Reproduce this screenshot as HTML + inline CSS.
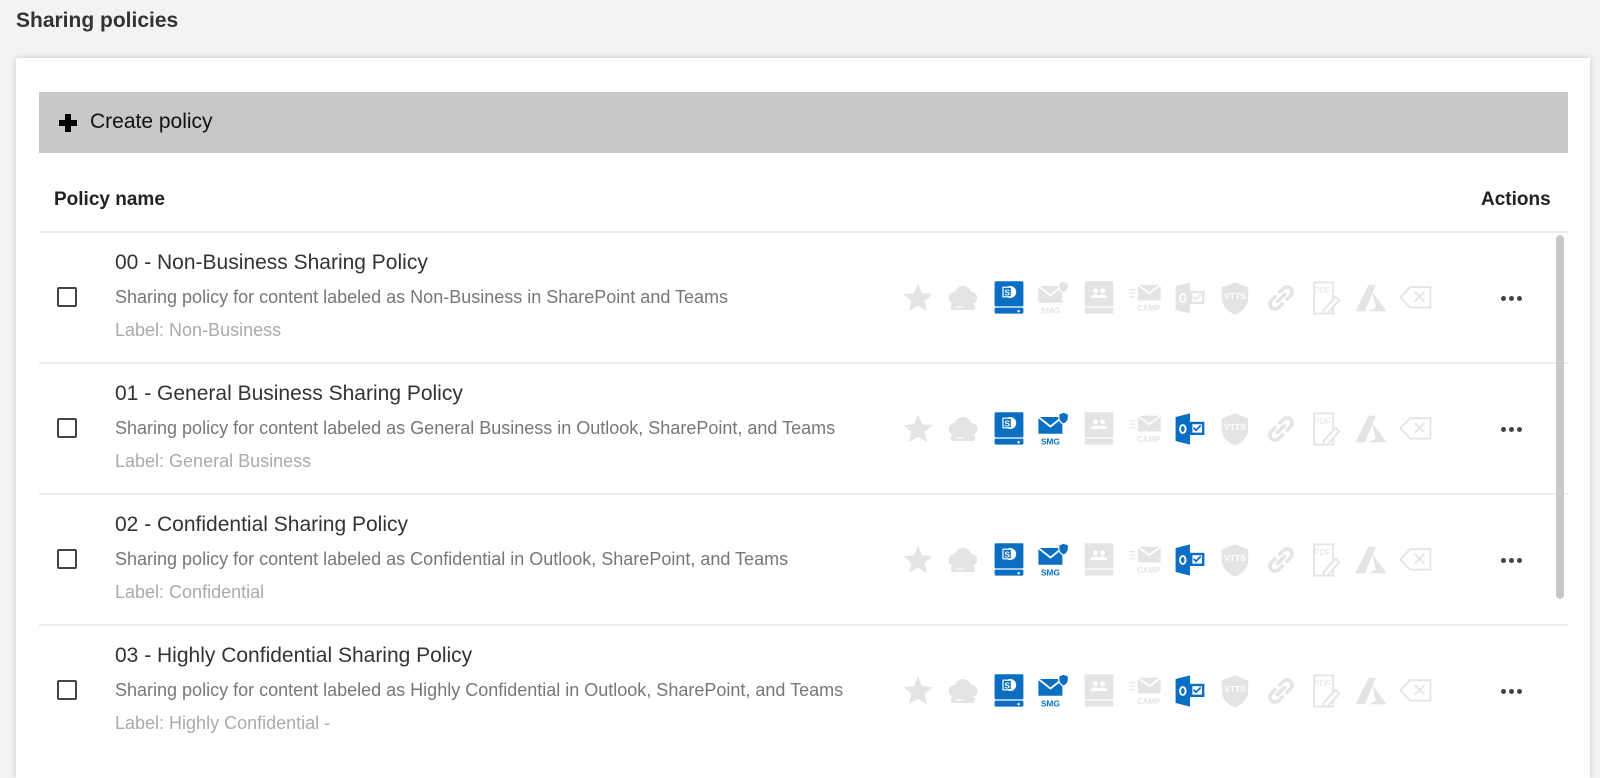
<!DOCTYPE html>
<html><head><meta charset="utf-8"><style>
*{box-sizing:border-box;margin:0;padding:0}
body{width:1600px;height:753px;background:#f3f3f3;font-family:"Liberation Sans",Arial,sans-serif;overflow:hidden;position:relative}
.h1{position:absolute;left:16px;top:9px;font-size:21px;font-weight:bold;color:#333}
.card{position:absolute;left:16px;top:58px;width:1574px;height:720px;background:#fff;box-shadow:0 0 6px rgba(0,0,0,.18)}
.bar{position:absolute;left:39px;top:92px;width:1529px;height:61px;background:#c8c8c8}
.bar span{position:absolute;left:51px;top:18px;font-size:21px;color:#111}
.plus{position:absolute;left:20px;top:22px;width:18px;height:18px}
.plus:before{content:"";position:absolute;left:6px;top:0;width:6px;height:18px;background:#000}
.plus:after{content:"";position:absolute;left:0;top:6px;width:18px;height:6px;background:#000}
.th{position:absolute;top:189px;font-size:19px;font-weight:bold;color:#222}
.line{position:absolute;left:39px;width:1529px;height:2px;background:#ececec}
.row{position:absolute;left:0;width:1600px;height:131px}
.cb{position:absolute;left:57px;top:55px;width:20px;height:20px;border:2px solid #444;border-radius:2px}
.t{position:absolute;left:115px;top:19px;font-size:21px;color:#333}
.d{position:absolute;left:115px;top:55px;font-size:18px;color:#777}
.l{position:absolute;left:115px;top:88px;font-size:18px;color:#aaa}
.ic{position:absolute;top:48px;width:36px;height:36px}
.dots{position:absolute;left:1501px;top:56px}
.dots i{display:inline-block;width:5px;height:5px;border-radius:50%;background:#444;margin-right:3px}
.sb{position:absolute;left:1556px;top:235px;width:8px;height:364px;background:#c8c8c8;border-radius:4px}
</style></head><body>
<div class="h1">Sharing policies</div>
<div class="card"></div>
<div class="bar"><div class="plus"></div><span>Create policy</span></div>
<div class="th" style="left:54px">Policy name</div>
<div class="th" style="left:1481px">Actions</div>
<div class="line" style="top:231px"></div>
<div class="line" style="top:362px"></div>
<div class="line" style="top:493px"></div>
<div class="line" style="top:624px"></div>
<div class="sb"></div>

<svg width="0" height="0" style="position:absolute">
<defs>
<g id="star"><path d="M15 3l3.5 8 8.5.8-6.5 5.7 2 8.5L15 21.5 7.5 26l2-8.5L3 11.8l8.5-.8z" fill="#e4e4e4"/></g>
<g id="cloud"><circle cx="15" cy="12" r="7" fill="#e4e4e4"/><circle cx="8" cy="15" r="5" fill="#e4e4e4"/><circle cx="22" cy="15" r="5" fill="#e4e4e4"/><rect x="8" y="14" width="14" height="6" fill="#e4e4e4"/><rect x="5" y="20" width="20" height="5" rx="2" fill="#e4e4e4"/><rect x="9" y="22" width="6" height="1" fill="#fff"/></g>
<g id="sp"><rect x="3" y="1" width="24" height="21" rx="1" fill="#0a6fc2"/><rect x="3" y="23" width="24" height="5" rx="1" fill="#0a6fc2"/><circle cx="16" cy="10" r="5" fill="#fff"/><rect x="10" y="6" width="7" height="8" fill="#0a6fc2" stroke="#fff"/><text x="13.5" y="13" font-size="7" font-weight="bold" fill="#fff" text-anchor="middle" font-family="Liberation Sans">S</text><circle cx="23" cy="26" r="1" fill="#fff"/></g>
<g id="smgB"><path d="M2 5h20v14H2z" fill="#0a6fc2"/><path d="M2 5l10 8 10-8" stroke="#fff" stroke-width="1.5" fill="none"/><path d="M23 1l4 1.5v3c0 3-2 4.5-4 5.5-2-1-4-2.5-4-5.5v-3z" fill="#0a6fc2" stroke="#fff"/><text x="12" y="28" font-size="7" font-weight="bold" fill="#0a6fc2" text-anchor="middle" font-family="Liberation Sans">SMG</text></g>
<g id="smgG"><path d="M2 5h20v14H2z" fill="#e4e4e4"/><path d="M2 5l10 8 10-8" stroke="#fff" stroke-width="1.5" fill="none"/><path d="M23 1l4 1.5v3c0 3-2 4.5-4 5.5-2-1-4-2.5-4-5.5v-3z" fill="#e4e4e4" stroke="#fff"/><text x="12" y="28" font-size="7" font-weight="bold" fill="#e4e4e4" text-anchor="middle" font-family="Liberation Sans">SMG</text></g>
<g id="grp"><rect x="3" y="1" width="24" height="21" rx="1" fill="#e4e4e4"/><rect x="3" y="23" width="24" height="5" rx="1" fill="#e4e4e4"/><circle cx="12" cy="9" r="2" fill="#fff"/><circle cx="18" cy="9" r="2" fill="#fff"/><path d="M8 15a4 3 0 0 1 8 0zM14 15a4 3 0 0 1 8 0z" fill="#fff"/></g>
<g id="camp"><path d="M9 4h19v13H9z" fill="#e4e4e4"/><path d="M9 4l9.5 7 9.5-7" stroke="#fff" stroke-width="1.5" fill="none"/><path d="M2 8h5M3 11h4M2 14h5" stroke="#e4e4e4"/><text x="18" y="26" font-size="6.5" font-weight="bold" fill="#e4e4e4" text-anchor="middle" font-family="Liberation Sans">CAMP</text></g>
<g id="olB"><path d="M3 5l12-3v26l-12-3z" fill="#0a6fc2"/><rect x="15" y="9" width="12" height="11" fill="#0a6fc2"/><rect x="17" y="11" width="8" height="7" fill="#fff"/><path d="M18 14l2 2 4-4" stroke="#0a6fc2" stroke-width="1.5" fill="none"/><ellipse cx="9" cy="15" rx="2.3" ry="3.3" fill="none" stroke="#fff" stroke-width="1.6"/></g>
<g id="olG"><path d="M3 5l12-3v26l-12-3z" fill="#e4e4e4"/><rect x="15" y="9" width="12" height="11" fill="#e4e4e4"/><rect x="17" y="11" width="8" height="7" fill="#fff"/><path d="M18 14l2 2 4-4" stroke="#e4e4e4" stroke-width="1.5" fill="none"/><ellipse cx="9" cy="15" rx="2.3" ry="3.3" fill="none" stroke="#fff" stroke-width="1.6"/></g>
<g id="vtts"><path d="M15 2l11 4v9c0 7-5 11-11 14C9 26 4 22 4 15V6z" fill="#e4e4e4"/><text x="15" y="16" font-size="7" font-weight="bold" fill="#fff" text-anchor="middle" font-family="Liberation Sans">VTTS</text></g>
<g id="link"><path d="M12 18l6-6M10 14l-3 3a4 4 0 0 0 6 6l3-3M20 16l3-3a4 4 0 0 0-6-6l-3 3" stroke="#e4e4e4" stroke-width="3" fill="none" stroke-linecap="round"/></g>
<g id="pdf"><path d="M5 2h16v26H5z" fill="none" stroke="#e4e4e4" stroke-width="1.5"/><text x="12" y="11" font-size="7" fill="#e4e4e4" text-anchor="middle" font-family="Liberation Sans">PDF</text><path d="M13 25l10-11 3 3-10 11h-3z" fill="#fff" stroke="#e4e4e4" stroke-width="1.5"/></g>
<g id="az"><path d="M13 4h6L10 26H2zM16 10l12 16H13l6-3z" fill="#e4e4e4"/></g>
<g id="clr"><path d="M10 6h17v17H10L2 14.5z" fill="none" stroke="#e4e4e4" stroke-width="1.5"/><path d="M14 10l8 8M22 10l-8 8" stroke="#e4e4e4" stroke-width="1.5"/></g>
</defs></svg>

<div class="row" style="top:232px">
<div class="cb"></div><div class="t">00 - Non-Business Sharing Policy</div>
<div class="d">Sharing policy for content labeled as Non-Business in SharePoint and Teams</div>
<div class="l">Label: Non-Business</div>
<svg class="ic" viewBox="0 0 30 30" style="left:900px"><use href="#star"/></svg><svg class="ic" viewBox="0 0 30 30" style="left:945px"><use href="#cloud"/></svg><svg class="ic" viewBox="0 0 30 30" style="left:991px"><use href="#sp"/></svg><svg class="ic" viewBox="0 0 30 30" style="left:1036px"><use href="#smgG"/></svg><svg class="ic" viewBox="0 0 30 30" style="left:1081px"><use href="#grp"/></svg><svg class="ic" viewBox="0 0 30 30" style="left:1127px"><use href="#camp"/></svg><svg class="ic" viewBox="0 0 30 30" style="left:1172px"><use href="#olG"/></svg><svg class="ic" viewBox="0 0 30 30" style="left:1217px"><use href="#vtts"/></svg><svg class="ic" viewBox="0 0 30 30" style="left:1263px"><use href="#link"/></svg><svg class="ic" viewBox="0 0 30 30" style="left:1308px"><use href="#pdf"/></svg><svg class="ic" viewBox="0 0 30 30" style="left:1353px"><use href="#az"/></svg><svg class="ic" viewBox="0 0 30 30" style="left:1398px"><use href="#clr"/></svg>
<div class="dots"><i></i><i></i><i></i></div></div>

<div class="row" style="top:363px">
<div class="cb"></div><div class="t">01 - General Business Sharing Policy</div>
<div class="d">Sharing policy for content labeled as General Business in Outlook, SharePoint, and Teams</div>
<div class="l">Label: General Business</div>
<svg class="ic" viewBox="0 0 30 30" style="left:900px"><use href="#star"/></svg><svg class="ic" viewBox="0 0 30 30" style="left:945px"><use href="#cloud"/></svg><svg class="ic" viewBox="0 0 30 30" style="left:991px"><use href="#sp"/></svg><svg class="ic" viewBox="0 0 30 30" style="left:1036px"><use href="#smgB"/></svg><svg class="ic" viewBox="0 0 30 30" style="left:1081px"><use href="#grp"/></svg><svg class="ic" viewBox="0 0 30 30" style="left:1127px"><use href="#camp"/></svg><svg class="ic" viewBox="0 0 30 30" style="left:1172px"><use href="#olB"/></svg><svg class="ic" viewBox="0 0 30 30" style="left:1217px"><use href="#vtts"/></svg><svg class="ic" viewBox="0 0 30 30" style="left:1263px"><use href="#link"/></svg><svg class="ic" viewBox="0 0 30 30" style="left:1308px"><use href="#pdf"/></svg><svg class="ic" viewBox="0 0 30 30" style="left:1353px"><use href="#az"/></svg><svg class="ic" viewBox="0 0 30 30" style="left:1398px"><use href="#clr"/></svg>
<div class="dots"><i></i><i></i><i></i></div></div>

<div class="row" style="top:494px">
<div class="cb"></div><div class="t">02 - Confidential Sharing Policy</div>
<div class="d">Sharing policy for content labeled as Confidential in Outlook, SharePoint, and Teams</div>
<div class="l">Label: Confidential</div>
<svg class="ic" viewBox="0 0 30 30" style="left:900px"><use href="#star"/></svg><svg class="ic" viewBox="0 0 30 30" style="left:945px"><use href="#cloud"/></svg><svg class="ic" viewBox="0 0 30 30" style="left:991px"><use href="#sp"/></svg><svg class="ic" viewBox="0 0 30 30" style="left:1036px"><use href="#smgB"/></svg><svg class="ic" viewBox="0 0 30 30" style="left:1081px"><use href="#grp"/></svg><svg class="ic" viewBox="0 0 30 30" style="left:1127px"><use href="#camp"/></svg><svg class="ic" viewBox="0 0 30 30" style="left:1172px"><use href="#olB"/></svg><svg class="ic" viewBox="0 0 30 30" style="left:1217px"><use href="#vtts"/></svg><svg class="ic" viewBox="0 0 30 30" style="left:1263px"><use href="#link"/></svg><svg class="ic" viewBox="0 0 30 30" style="left:1308px"><use href="#pdf"/></svg><svg class="ic" viewBox="0 0 30 30" style="left:1353px"><use href="#az"/></svg><svg class="ic" viewBox="0 0 30 30" style="left:1398px"><use href="#clr"/></svg>
<div class="dots"><i></i><i></i><i></i></div></div>

<div class="row" style="top:625px">
<div class="cb"></div><div class="t">03 - Highly Confidential Sharing Policy</div>
<div class="d">Sharing policy for content labeled as Highly Confidential in Outlook, SharePoint, and Teams</div>
<div class="l">Label: Highly Confidential -</div>
<svg class="ic" viewBox="0 0 30 30" style="left:900px"><use href="#star"/></svg><svg class="ic" viewBox="0 0 30 30" style="left:945px"><use href="#cloud"/></svg><svg class="ic" viewBox="0 0 30 30" style="left:991px"><use href="#sp"/></svg><svg class="ic" viewBox="0 0 30 30" style="left:1036px"><use href="#smgB"/></svg><svg class="ic" viewBox="0 0 30 30" style="left:1081px"><use href="#grp"/></svg><svg class="ic" viewBox="0 0 30 30" style="left:1127px"><use href="#camp"/></svg><svg class="ic" viewBox="0 0 30 30" style="left:1172px"><use href="#olB"/></svg><svg class="ic" viewBox="0 0 30 30" style="left:1217px"><use href="#vtts"/></svg><svg class="ic" viewBox="0 0 30 30" style="left:1263px"><use href="#link"/></svg><svg class="ic" viewBox="0 0 30 30" style="left:1308px"><use href="#pdf"/></svg><svg class="ic" viewBox="0 0 30 30" style="left:1353px"><use href="#az"/></svg><svg class="ic" viewBox="0 0 30 30" style="left:1398px"><use href="#clr"/></svg>
<div class="dots"><i></i><i></i><i></i></div></div>
</body></html>
